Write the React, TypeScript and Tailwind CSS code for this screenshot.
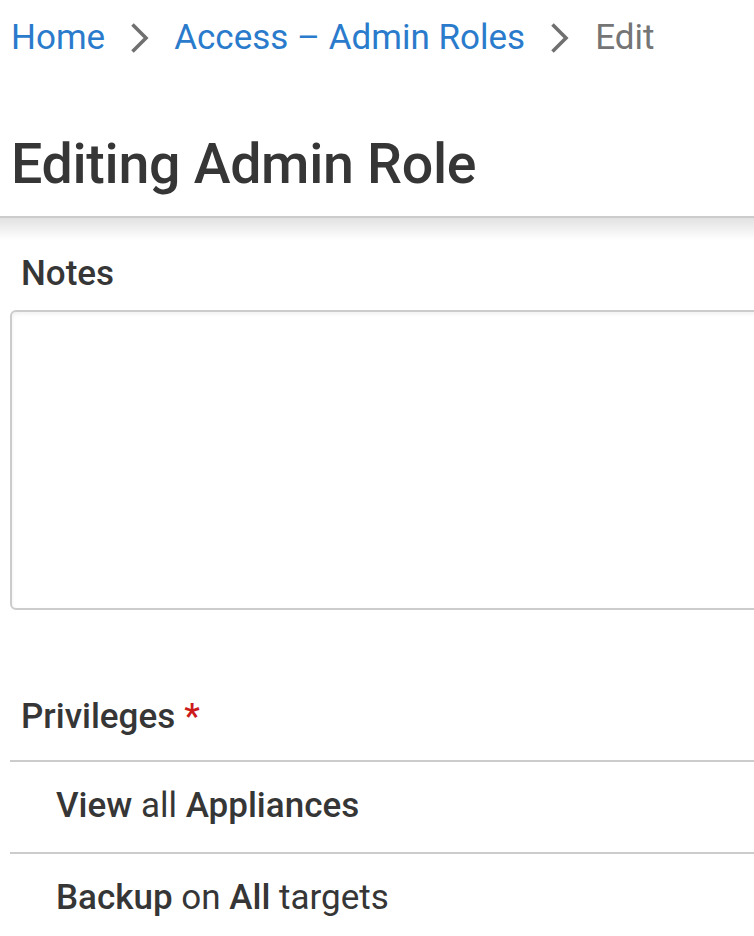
import React from "react";

function Chevron() {
  return (
    <svg width="20" height="32" viewBox="0 0 20 32" className="shrink-0">
      <path d="M2.5 2.5 L16 16 L2.5 29.5" fill="none" stroke="#707070" strokeWidth="3.6" />
    </svg>
  );
}

export default function App() {
  return (
    <div
      className="w-[754px] h-[936px] overflow-hidden bg-white text-[#363636]"
      style={{ fontFamily: "Roboto, 'Noto Sans', sans-serif" }}
    >
      <div className="h-[218px] border-b-2 border-[#cccccc] flex flex-col">
        <div className="flex items-center h-[76px] pl-[11px] text-[35px]">
          <span className="text-[#2b7bcc]">Home</span>
          <span className="ml-[25px] mr-[24px] flex items-center"><Chevron /></span>
          <span className="text-[#2b7bcc]">Access – Admin Roles</span>
          <span className="ml-[25px] mr-[25px] flex items-center"><Chevron /></span>
          <span className="text-[#757575]">Edit</span>
        </div>
        <div className="mt-[61px] pl-[11px] text-[55.5px] font-medium leading-none tracking-[-0.3px]">
          Editing Admin Role
        </div>
      </div>
      <div className="h-[22px] bg-gradient-to-b from-[#e2e2e2] to-white" />
      <div className="pl-[21px] mt-[16px] text-[35px] font-medium leading-none">Notes</div>
      <div className="ml-[10px] mt-[19px] w-[760px] h-[300px] border-2 border-[#cccccc] rounded-[6px] shadow-[inset_0_2px_4px_rgba(0,0,0,0.06)]" />
      <div className="pl-[21px] mt-[89px] text-[35px] font-medium leading-none flex">
        Privileges<span className="ml-[9px] text-[#cc1a1a]">*</span>
      </div>
      <div className="ml-[10px] mt-[26px] border-t-2 border-[#cccccc]">
        <div className="h-[90px] flex items-center pb-[4px] pl-[46px] text-[35px] leading-none">
          <span className="font-medium">View</span>&nbsp;all&nbsp;<span className="font-medium">Appliances</span>
        </div>
        <div className="border-t-2 border-[#cccccc] h-[92px] flex items-center pb-[4px] pl-[46px] text-[35px] leading-none">
          <span className="font-medium">Backup</span>&nbsp;on&nbsp;<span className="font-medium">All</span>&nbsp;targets
        </div>
      </div>
    </div>
  );
}
